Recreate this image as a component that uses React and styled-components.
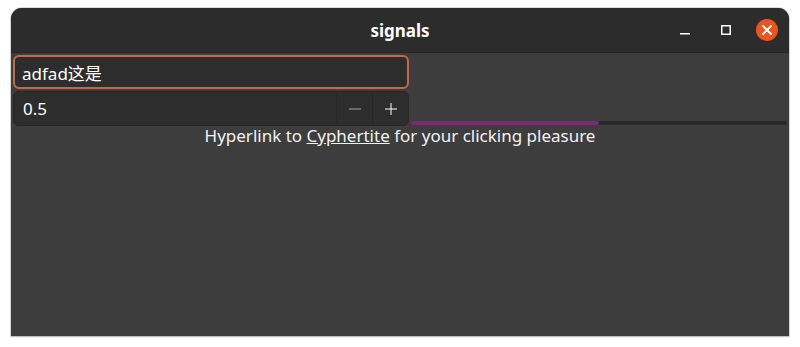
import React, { useState } from "react";
import styled, { createGlobalStyle } from "styled-components";

const GlobalStyle = createGlobalStyle`
  html, body {
    margin: 0;
    padding: 0;
    background: #ffffff;
  }
  body {
    font-family: "Noto Sans", "Noto Sans CJK SC", sans-serif;
  }
`;

const Page = styled.div`
  padding: 8px 11px 0 11px;
  width: 800px;
  height: 347px;
  box-sizing: border-box;
`;

const Window = styled.div`
  width: 778px;
  height: 328px;
  border-radius: 11px 11px 0 0;
  overflow: hidden;
  background: #3d3d3d;
  box-shadow: 0 0 0 1px rgba(0, 0, 0, 0.12), 0 1px 2px rgba(0, 0, 0, 0.2);
  display: flex;
  flex-direction: column;
`;

const TitleBar = styled.div`
  height: 45px;
  flex: none;
  background: #2c2c2c;
  display: grid;
  grid-template-columns: 1fr auto 1fr;
  align-items: center;
  border-bottom: 1px solid #262626;
  box-sizing: border-box;
`;

const Title = styled.div`
  grid-column: 2;
  color: #ffffff;
  font-weight: 700;
  font-size: 17px;
  margin-top: 1px;
`;

const Controls = styled.div`
  grid-column: 3;
  justify-self: end;
  display: flex;
  align-items: center;
  gap: 19px;
  padding-right: 11px;
`;

const CtlButton = styled.div`
  width: 22px;
  height: 22px;
  border-radius: 50%;
  display: flex;
  align-items: center;
  justify-content: center;
  background: ${(p) => (p.$close ? "#e95420" : "transparent")};
`;

const Body = styled.div`
  flex: 1;
  padding: 2px 2px 0 2px;
  display: grid;
  grid-template-columns: 396px 1fr;
  grid-template-rows: 34px 34px auto;
  row-gap: 3px;
  column-gap: 1px;
  align-content: start;
`;

const Entry = styled.div`
  grid-column: 1;
  border: 2px solid #c0694c;
  border-radius: 6px;
  background: #2d2d2d;
  color: #ffffff;
  font-size: 17px;
  display: flex;
  align-items: center;
  padding: 0 7px;
  box-sizing: border-box;
`;

const Spin = styled.div`
  grid-column: 1;
  grid-row: 2;
  border: 1px solid #262626;
  border-radius: 6px;
  background: #2d2d2d;
  color: #ffffff;
  font-size: 17px;
  display: flex;
  align-items: stretch;
  box-sizing: border-box;
  margin-top: -1px;
  height: 35px;
`;

const SpinValue = styled.div`
  flex: 1;
  display: flex;
  align-items: center;
  padding-left: 9px;
`;

const SpinButton = styled.div`
  width: 35px;
  border-left: 1px solid #262626;
  display: flex;
  align-items: center;
  justify-content: center;
`;

const Trough = styled.div`
  grid-column: 2;
  grid-row: 2;
  align-self: end;
  height: 4px;
  margin-bottom: 1px;
  border-radius: 3px;
  background: #282828;
  overflow: hidden;
`;

const Fill = styled.div`
  height: 100%;
  background: #7a2a72;
  border-radius: 3px;
`;

const Label = styled.div`
  grid-column: 1 / span 2;
  grid-row: 3;
  text-align: center;
  color: #f2f2f2;
  font-size: 17px;
  line-height: 20px;
  margin-top: -3px;
`;

const Link = styled.a`
  color: #f2f2f2;
  text-decoration: underline;
`;

export default function App() {
  const [text] = useState("adfad这是");
  const [value] = useState(0.5);

  return (
    <Page>
      <GlobalStyle />
      <Window>
        <TitleBar>
          <Title>signals</Title>
          <Controls>
            <CtlButton>
              <svg width="12" height="12" viewBox="0 0 12 12">
                <rect x="1" y="9" width="10" height="1.5" fill="#ffffff" />
              </svg>
            </CtlButton>
            <CtlButton>
              <svg width="12" height="12" viewBox="0 0 12 12">
                <rect x="1.75" y="1.75" width="8.5" height="8.5" fill="none" stroke="#ffffff" strokeWidth="1.5" />
              </svg>
            </CtlButton>
            <CtlButton $close>
              <svg width="12" height="12" viewBox="0 0 12 12">
                <path d="M2 2 L10 10 M10 2 L2 10" stroke="#ffffff" strokeWidth="1.8" strokeLinecap="round" />
              </svg>
            </CtlButton>
          </Controls>
        </TitleBar>
        <Body>
          <Entry>{text}</Entry>
          <Spin>
            <SpinValue>{value}</SpinValue>
            <SpinButton>
              <svg width="14" height="14" viewBox="0 0 14 14">
                <rect x="1" y="6.5" width="12" height="1" fill="#a8a8a8" />
              </svg>
            </SpinButton>
            <SpinButton>
              <svg width="14" height="14" viewBox="0 0 14 14">
                <rect x="1" y="6.5" width="12" height="1" fill="#ffffff" />
                <rect x="6.5" y="1" width="1" height="12" fill="#ffffff" />
              </svg>
            </SpinButton>
          </Spin>
          <Trough>
            <Fill style={{ width: `${value * 100}%` }} />
          </Trough>
          <Label>
            Hyperlink to <Link href="#">Cyphertite</Link> for your clicking pleasure
          </Label>
        </Body>
      </Window>
    </Page>
  );
}
